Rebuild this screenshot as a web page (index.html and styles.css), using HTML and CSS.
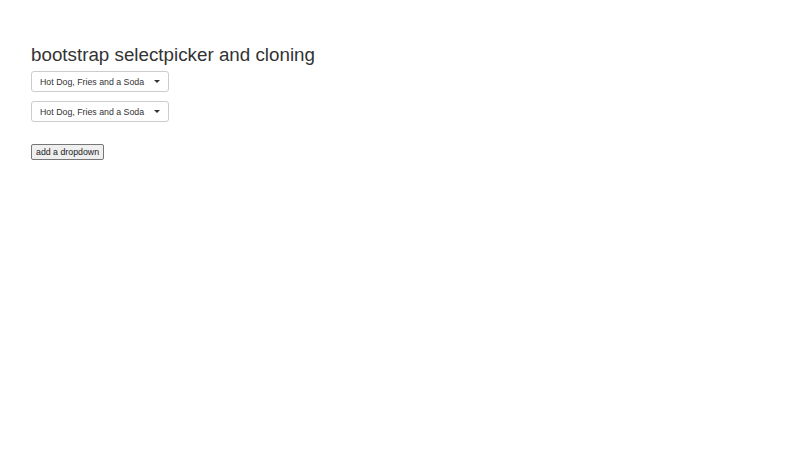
FILE: index.html
```html
<!DOCTYPE html>
<html>
<head>
<meta charset="utf-8">
<link rel="stylesheet" href="styles.css">
</head>
<body>
<div class="container">
  <h1 class="title">bootstrap selectpicker and cloning</h1>
  <div class="pickers">
    <div class="picker"><span class="label">Hot Dog, Fries and a Soda</span><span class="caret"></span></div>
    <div class="picker"><span class="label">Hot Dog, Fries and a Soda</span><span class="caret"></span></div>
  </div>
  <button class="add">add a dropdown</button>
</div>
</body>
</html>
```

FILE: styles.css
```css
html, body { margin: 0; padding: 0; background: #fff; }
body { font-family: "Liberation Sans", Arial, sans-serif; color: #333; }
.container { padding: 0 31px; }
.title { font-size: 18.8px; font-weight: 400; line-height: 22px; margin: 0; padding-top: 44px; color: #333; }
.pickers { display: flex; flex-direction: column; gap: 9px; margin-top: 5px; align-items: flex-start; }
.picker {
  box-sizing: border-box; width: 138px; height: 21px;
  border: 1px solid #ccc; border-radius: 3px;
  display: flex; align-items: center; justify-content: space-between;
  padding: 0 8px 0 8px; font-size: 8.8px; color: #333; background: #fff;
  white-space: nowrap;
}
.caret { width: 0; height: 0; border-left: 3px solid transparent; border-right: 3px solid transparent; border-top: 3px solid #333; }
.add {
  display: block; margin-top: 22px; font-family: "Liberation Sans", Arial, sans-serif;
  font-size: 8.8px; height: 16px; padding: 0 4px; color: #222;
  background: #efefef; border: 1px solid #767676; border-radius: 2px;
}
```
